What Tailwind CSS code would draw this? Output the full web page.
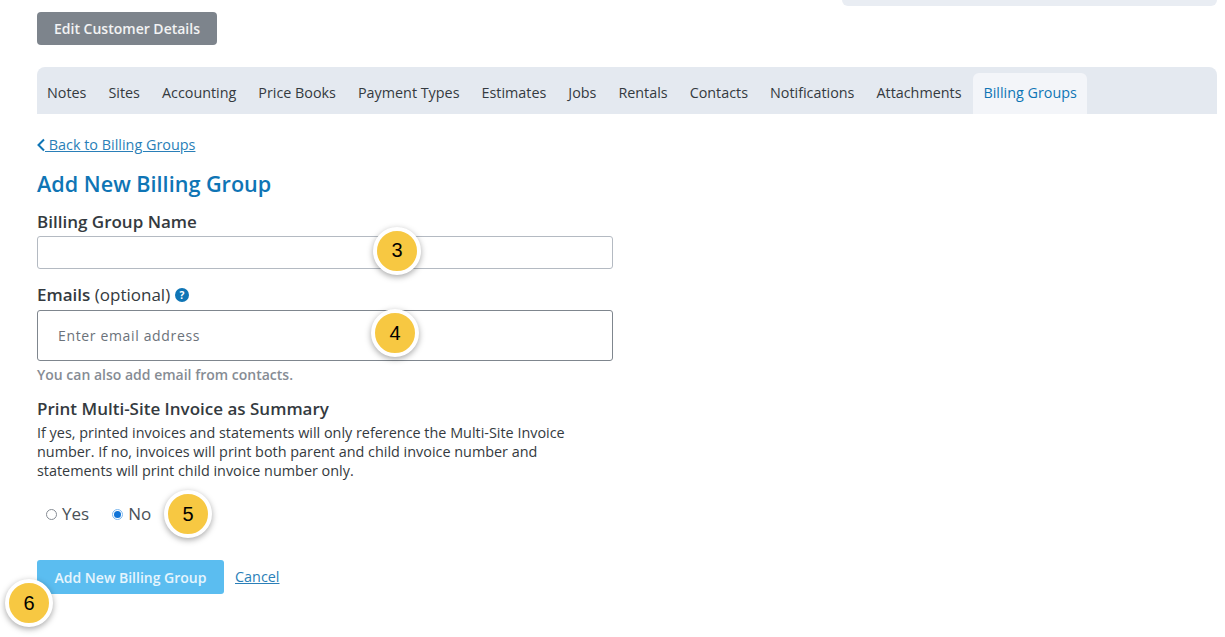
<!DOCTYPE html>
<html lang="en">

<head>
  <meta charset="UTF-8">
  <meta name="viewport" content="width=device-width, initial-scale=1.0">
  <title>Add New Billing Group</title>
  <script src="https://cdn.jsdelivr.net/npm/@tailwindcss/browser@4"></script>
</head>

<body class="bg-white font-['Open_Sans',sans-serif] text-[#343a40] h-[637px] overflow-hidden relative">

  <div class="pl-[37px] pr-2">
    <div class="flex justify-end h-[6px]">
      <div class="w-[375px] bg-[#e9edf3] rounded-b-lg"></div>
    </div>

    <button class="mt-[6px] block w-[180px] h-[33px] bg-[#7d848c] rounded text-white/90 text-[14px] font-semibold">Edit Customer Details</button>

    <!-- tabs -->
    <nav class="mt-[22px] h-[47px] bg-[#e4e9f0] rounded-t-lg flex items-end gap-[2px] text-[14.35px]">
      <a class="px-2.5 h-[41px] leading-[40px]">Notes</a>
      <a class="px-2.5 h-[41px] leading-[40px]">Sites</a>
      <a class="px-2.5 h-[41px] leading-[40px]">Accounting</a>
      <a class="px-2.5 h-[41px] leading-[40px]">Price Books</a>
      <a class="px-2.5 h-[41px] leading-[40px]">Payment Types</a>
      <a class="px-2.5 h-[41px] leading-[40px]">Estimates</a>
      <a class="px-2.5 h-[41px] leading-[40px]">Jobs</a>
      <a class="px-2.5 h-[41px] leading-[40px]">Rentals</a>
      <a class="px-2.5 h-[41px] leading-[40px]">Contacts</a>
      <a class="px-2.5 h-[41px] leading-[40px]">Notifications</a>
      <a class="px-2.5 h-[41px] leading-[40px]">Attachments</a>
      <a class="px-2.5 h-[41px] leading-[40px] bg-[#f3f5f9] rounded-t-md text-[#0f75b5]">Billing Groups</a>
    </nav>

    <a class="mt-[21px] block w-fit text-[14.4px] leading-5 text-[#2a7fb8] underline"><svg class="inline w-2 h-[14px] align-[-2px]" viewBox="0 0 8 14" fill="none" stroke="#0f75b5" stroke-width="2"><path d="M7 1.5 1.5 7 7 12.5" /></svg>&nbsp;Back to Billing Groups</a>

    <h1 class="mt-[14px] text-[21.6px] leading-[30px] font-semibold text-[#0f75b5]">Add New Billing Group</h1>

    <div class="w-[576px]">
      <label class="mt-[12px] block text-[17px] leading-[22px] font-semibold">Billing Group Name</label>
      <input type="text" class="mt-[3px] block w-full h-[33px] border border-[#b4bac2] rounded-[3px] bg-white">

      <div class="mt-[15px] flex items-center text-[17px] leading-[22px]">
        <span class="font-semibold">Emails</span>&nbsp;(optional)
        <svg class="ml-[5px] w-[14px] h-[14px]" viewBox="0 0 15 15">
          <circle cx="7.5" cy="7.5" r="7.5" fill="#0f75b5" />
          <text x="7.5" y="11.5" text-anchor="middle" font-size="11" font-weight="700" fill="#fff">?</text>
        </svg>
      </div>
      <div class="mt-[4px] h-[51px] border border-[#7f868e] rounded-[3px] pl-[20px] flex items-center text-sm tracking-[0.65px] text-[#6b727a]">Enter email address</div>
      <p class="mt-[5px] text-[14px] leading-[18px] font-semibold text-[#868c94]">You can also add email from contacts.</p>

      <h2 class="mt-[14px] text-[17px] leading-[22px] font-semibold">Print Multi-Site Invoice as Summary</h2>
      <p class="mt-[3px] w-[560px] text-[14.4px] leading-[19px]">If yes, printed invoices and statements will only reference the Multi-Site Invoice number. If no, invoices will print both parent and child invoice number and statements will print child invoice number only.</p>

      <div class="mt-[22px] pl-[9px] flex items-center gap-[23px] text-[17px] leading-[24px] text-[#4a5158]">
        <label class="flex items-center gap-[5px]">
          <span class="w-[11px] h-[11px] rounded-full border border-[#868c94] bg-white"></span>Yes
        </label>
        <label class="flex items-center gap-[5px]">
          <span class="w-[11px] h-[11px] rounded-full border border-[#7db8ef] bg-white flex items-center justify-center"><span class="w-[7px] h-[7px] rounded-full bg-[#0f74d8]"></span></span>No
        </label>
      </div>

      <div class="mt-[34px] flex items-center gap-[11px]">
        <button class="w-[187px] h-[34px] bg-[#5bbdf0] rounded-[3px] text-white/85 text-[14px] font-semibold">Add New Billing Group</button>
        <a class="text-[14.4px] text-[#2a7fb8] underline">Cancel</a>
      </div>
    </div>
  </div>

  <!-- numbered callouts -->
  <div class="absolute left-[373px] top-[227px] w-[48px] h-[48px] rounded-full bg-[#f7c842] border-[4px] border-white shadow-[0_2px_6px_rgba(0,0,0,0.35)] flex items-center justify-center font-['Liberation_Sans',sans-serif] text-[20px] leading-[20px] pb-[2px] text-black">3</div>
  <div class="absolute left-[371px] top-[309px] w-[48px] h-[48px] rounded-full bg-[#f7c842] border-[4px] border-white shadow-[0_2px_6px_rgba(0,0,0,0.35)] flex items-center justify-center font-['Liberation_Sans',sans-serif] text-[20px] leading-[20px] text-black">4</div>
  <div class="absolute left-[164px] top-[490px] w-[48px] h-[48px] rounded-full bg-[#f7c842] border-[4px] border-white shadow-[0_2px_6px_rgba(0,0,0,0.35)] flex items-center justify-center font-['Liberation_Sans',sans-serif] text-[20px] leading-[20px] text-black">5</div>
  <div class="absolute left-[5px] top-[579px] w-[48px] h-[48px] rounded-full bg-[#f7c842] border-[4px] border-white shadow-[0_2px_6px_rgba(0,0,0,0.35)] flex items-center justify-center font-['Liberation_Sans',sans-serif] text-[20px] leading-[20px] text-black">6</div>

</body>

</html>
